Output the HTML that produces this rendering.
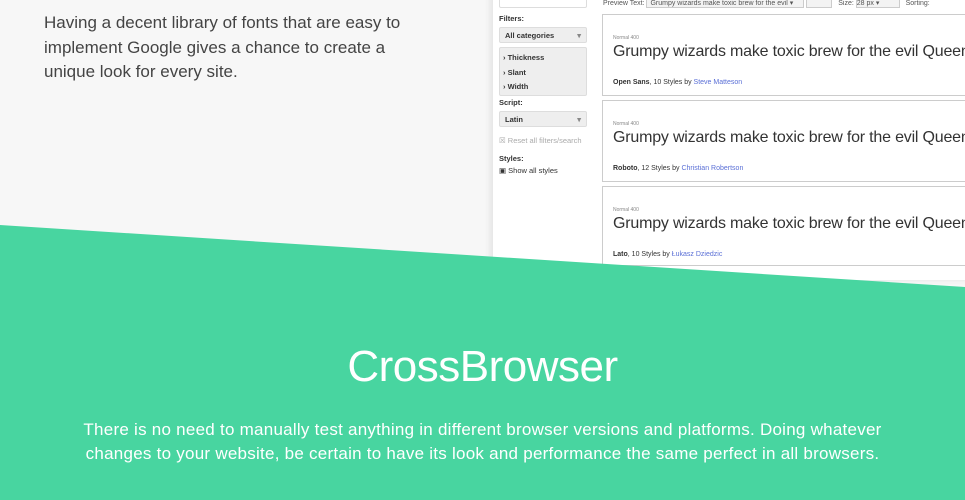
<!DOCTYPE html>
<html><head><meta charset="utf-8"><style>
*{margin:0;padding:0;box-sizing:border-box}
body{width:965px;height:500px;overflow:hidden;background:#f7f7f7;position:relative;font-family:"Liberation Sans",sans-serif}
.lead{position:absolute;left:44px;top:11px;width:390px;font-size:17px;line-height:24.5px;color:#444}
.shot{position:absolute;left:493px;top:-10px;width:480px;height:290px;background:#fff;box-shadow:-3px 0 6px rgba(0,0,0,.08);font-family:"Liberation Sans",sans-serif;color:#333}
.side{position:absolute;left:6px;top:0;width:88px;font-size:7.5px;font-weight:bold}
.box{background:#eee;border:1px solid #ddd;border-radius:2px}
.card{position:absolute;left:109px;width:380px;border:1px solid #ccc;background:#fff}
.card .n{position:absolute;left:10px;font-size:5px;color:#888}
.card .g{position:absolute;left:10px;font-size:16px;color:#333;white-space:nowrap;letter-spacing:-.2px}
.card .b{position:absolute;left:10px;font-size:7px;color:#333;white-space:nowrap}
.card .b a{color:#5a6fd6}
.green{position:absolute;left:0;top:0;width:965px;height:500px;background:#48d5a0;clip-path:polygon(0 225px,965px 287px,965px 500px,0 500px)}
h1{position:absolute;left:0;width:965px;top:342px;text-align:center;color:#fff;font-weight:normal;font-size:44px;letter-spacing:-.5px}
p.d{position:absolute;left:60px;width:845px;top:418px;text-align:center;color:#fff;font-size:17px;line-height:24px;letter-spacing:.25px}
</style></head><body>
<div class="lead">Having a decent library of fonts that are easy to implement Google gives a chance to create a unique look for every site.</div>
<div class="shot">
 <div class="side">
  <div class="box" style="height:12px;background:#fff;margin-top:6px"></div>
  <div style="margin-top:6px">Filters:</div>
  <div class="box" style="margin-top:4px;padding:3px 5px;height:16px">All categories<span style="float:right;color:#888">▾</span></div>
  <div class="box" style="margin-top:4px;padding:3px 3px;line-height:14.5px;height:49px">› Thickness<br>› Slant<br>› Width</div>
  <div style="margin-top:2px">Script:</div>
  <div class="box" style="margin-top:4px;padding:3px 5px;height:16px">Latin<span style="float:right;color:#888">▾</span></div>
  <div style="margin-top:9px;color:#aaa;font-weight:normal">☒ Reset all filters/search</div>
  <div style="margin-top:9px">Styles:</div>
  <div style="margin-top:3px;font-weight:normal">▣ Show all styles</div>
 </div>
 <div style="position:absolute;left:110px;top:8px;font-size:7px;color:#555;white-space:nowrap">Preview Text: <span style="display:inline-block;width:158px;border:1px solid #ccc;background:#f3f3f3;padding:0 3px">Grumpy wizards make toxic brew for the evil ▾</span> <span style="display:inline-block;width:26px;border:1px solid #ccc;background:#f3f3f3">&nbsp;</span> &nbsp;&nbsp;Size: <span style="display:inline-block;width:44px;border:1px solid #ccc;background:#f3f3f3">28 px ▾</span> &nbsp;&nbsp;Sorting:</div>
 <div class="card" style="top:24px;height:82px"><div class="n" style="top:20px">Normal 400</div><div class="g" style="top:28px">Grumpy wizards make toxic brew for the evil Queen</div><div class="b" style="top:64px"><b>Open Sans</b>, 10 Styles by <a>Steve Matteson</a></div></div>
 <div class="card" style="top:110px;height:82px"><div class="n" style="top:20px">Normal 400</div><div class="g" style="top:28px">Grumpy wizards make toxic brew for the evil Queen and</div><div class="b" style="top:64px"><b>Roboto</b>, 12 Styles by <a>Christian Robertson</a></div></div>
 <div class="card" style="top:196px;height:80px"><div class="n" style="top:20px">Normal 400</div><div class="g" style="top:28px">Grumpy wizards make toxic brew for the evil Queen and</div><div class="b" style="top:64px"><b>Lato</b>, 10 Styles by <a>Łukasz Dziedzic</a></div></div>
</div>
<div class="green"></div>
<h1>CrossBrowser</h1>
<p class="d">There is no need to manually test anything in different browser versions and platforms. Doing whatever changes to your website, be certain to have its look and performance the same perfect in all browsers.</p>
</body></html>
